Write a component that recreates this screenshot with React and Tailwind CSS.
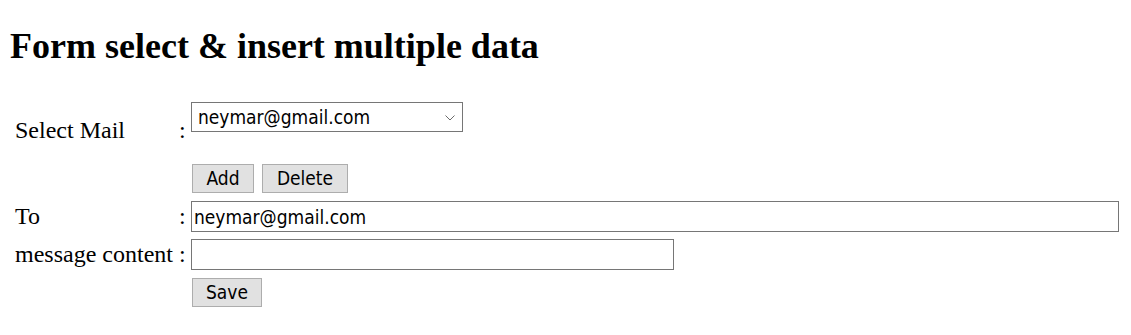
export default function App() {
  const label = 'w-[179px] pl-[15px] text-[24px] leading-[27px]';
  const colon = 'w-[12px] text-[24px] leading-[27px]';
  const control =
    "font-['DejaVu_Sans_Condensed','DejaVu_Sans',sans-serif] font-stretch-condensed text-[19px] text-black";
  const button =
    "h-[29px] border border-[#adadad] bg-[#e1e1e1] px-[13px] leading-[25px] " + control;

  return (
    <div className="min-h-screen bg-white font-['Liberation_Serif',serif] text-black">
      <h1 className="m-0 pl-[10px] pt-[26px] text-[36px] font-bold leading-[41px]">
        Form select &amp; insert multiple data
      </h1>

      <form className="mt-[35px] flex flex-col" onSubmit={(e) => e.preventDefault()}>
        {/* select row */}
        <div className="flex h-[56px] items-center">
          <div className={label}>Select Mail</div>
          <div className={colon}>:</div>
          <div className="flex h-full flex-col">
            <div className="relative h-[30px] w-[272px]">
              <select
                defaultValue="neymar@gmail.com"
                className={`h-full w-full appearance-none border border-[#767676] bg-white pl-[6px] leading-[28px] outline-none ${control}`}
              >
                <option>neymar@gmail.com</option>
                <option>messi@gmail.com</option>
                <option>ronaldo@gmail.com</option>
              </select>
              <svg
                className="pointer-events-none absolute right-[8px] top-[13px]"
                width="10"
                height="6"
                viewBox="0 0 10 6"
                fill="none"
                stroke="#6b6b6b"
                strokeWidth="1"
              >
                <path d="M0.5 0.5 L5 5 L9.5 0.5" />
              </svg>
            </div>
          </div>
        </div>

        {/* add / delete */}
        <div className="mt-[6px] flex h-[29px] items-center">
          <div className="w-[192px]" />
          <div className="flex gap-[8px]">
            <button type="button" className={`w-[62px] ${button}`}>Add</button>
            <button type="button" className={`w-[86px] ${button}`}>Delete</button>
          </div>
        </div>

        {/* to */}
        <div className="mt-[8px] flex h-[31px] items-center">
          <div className={label}>To</div>
          <div className={colon}>:</div>
          <input
            defaultValue="neymar@gmail.com"
            className={`h-[31px] w-[928px] border border-[#767676] bg-white pl-[2px] outline-none ${control}`}
          />
        </div>

        {/* message */}
        <div className="mt-[7px] flex h-[31px] items-center">
          <div className={label}>message content</div>
          <div className={colon}>:</div>
          <input
            className={`h-[31px] w-[483px] border border-[#767676] bg-white pl-[2px] outline-none ${control}`}
          />
        </div>

        {/* save */}
        <div className="mt-[8px] flex h-[29px] items-center">
          <div className="w-[192px]" />
          <button type="submit" className={`w-[70px] ${button}`}>Save</button>
        </div>
      </form>
    </div>
  );
}
